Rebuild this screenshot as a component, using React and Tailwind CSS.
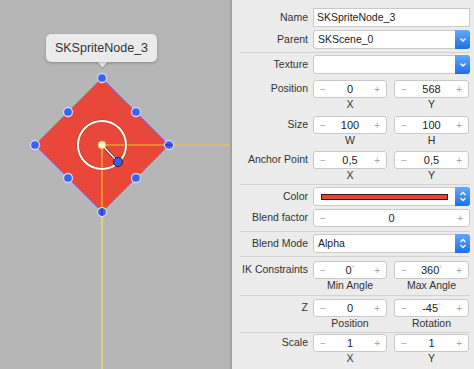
import React from 'react';

const font = { fontFamily: '"Liberation Sans", Arial, sans-serif' };

function Label({ children }) {
  return (
    <div className="w-[81px] shrink-0 pr-[5px] text-right text-[10.5px] text-[#333]">{children}</div>
  );
}

function Divider() {
  return <div className="ml-[8px] h-px bg-[#d2d2d2]" />;
}

function Deg({ children }) {
  return (
    <span>
      {children}
      <span className="relative -top-[3px] text-[7px] text-[#aaa]">°</span>
    </span>
  );
}

function Stepper({ value, sub }) {
  return (
    <div className="flex flex-col items-center">
      <div className="flex h-[18px] w-full items-center justify-between rounded-[3px] border border-[#c9c9c9] bg-white px-[6px] text-[11px] text-[#222]">
        <span className="text-[10px] text-[#a5a5a5]">−</span>
        <span>{value}</span>
        <span className="text-[10px] text-[#a5a5a5]">+</span>
      </div>
      {sub && <div className="h-[13px] text-[10.5px] leading-[13px] text-[#333]">{sub}</div>}
    </div>
  );
}

function StepperRow({ label, a, b, subA, subB, className = '' }) {
  return (
    <div className={`flex items-start ${className}`}>
      <div className="flex h-[18px] items-center">
        <Label>{label}</Label>
      </div>
      <div className="grid w-[156px] grid-cols-[74px_75px] gap-[7px]">
        <Stepper value={a} sub={subA} />
        <Stepper value={b} sub={subB} />
      </div>
    </div>
  );
}

function BlueButton({ updown }) {
  return (
    <div className="flex h-[19px] w-[15px] items-center justify-center rounded-r-[3px] bg-gradient-to-b from-[#62a8fb] to-[#1b6ded]">
      {updown ? (
        <svg width="8" height="11" viewBox="0 0 8 11">
          <path d="M1.5 4 L4 1.5 L6.5 4 M1.5 7 L4 9.5 L6.5 7" fill="none" stroke="white" strokeWidth="1.3" />
        </svg>
      ) : (
        <svg width="8" height="6" viewBox="0 0 8 6">
          <path d="M1.5 1.5 L4 4 L6.5 1.5" fill="none" stroke="white" strokeWidth="1.4" />
        </svg>
      )}
    </div>
  );
}

function SelectRow({ label, value, updown, className = '', children }) {
  return (
    <div className={`flex items-center ${className}`}>
      <Label>{label}</Label>
      <div className="flex h-[19px] w-[157px] items-stretch rounded-[3px] border border-[#c9c9c9] bg-white">
        <div className="flex flex-1 items-center px-[4px] text-[10.5px] text-[#222]">
          {children || value}
        </div>
        <div className="-my-px -mr-px">
          <BlueButton updown={updown} />
        </div>
      </div>
    </div>
  );
}

function Canvas() {
  return (
    <div className="relative h-[369px] w-[230px] shrink-0 bg-[#b6b6b6]">
      <svg width="230" height="369" className="absolute left-0 top-0">
        <polygon points="102,78 169,145 102,212 35,145" fill="#e9473a" stroke="#8773c4" strokeWidth="1" />
        <line x1="102" y1="145" x2="102" y2="212" stroke="#f6a62a" strokeWidth="1.5" />
        <line x1="102" y1="212" x2="102" y2="369" stroke="#e2cf86" strokeWidth="2" />
        <line x1="102" y1="145" x2="169" y2="145" stroke="#f5bf33" strokeWidth="1.2" />
        <line x1="169" y1="145" x2="230" y2="145" stroke="#f2cc3c" strokeWidth="1.2" />
        <circle cx="102" cy="145" r="24" fill="none" stroke="#6b3a30" strokeWidth="3.2" opacity="0.5" />
        <circle cx="102" cy="145" r="24" fill="none" stroke="#fffbee" strokeWidth="2" />
        <line x1="102" y1="145" x2="118" y2="162" stroke="#5a2a20" strokeWidth="3" />
        <line x1="102" y1="145" x2="118" y2="162" stroke="#ffffff" strokeWidth="1.5" />
        <circle cx="118" cy="162" r="4.5" fill="#3e5fe2" stroke="#1f1f2a" strokeWidth="1" />
        <circle cx="102" cy="145" r="4" fill="#fff4c8" stroke="#d8b24a" strokeWidth="1" />
        {[
          [102, 78],
          [68, 112],
          [136, 112],
          [35, 145],
          [169, 145],
          [68, 178],
          [136, 178],
          [102, 212],
        ].map(([x, y]) => (
          <circle key={`${x}-${y}`} cx={x} cy={y} r="4.5" fill="#3d63ee" stroke="#cfd6ff" strokeWidth="1.3" />
        ))}
        <line x1="102" y1="208" x2="102" y2="216" stroke="#2b3a8a" strokeWidth="1.2" />
        <line x1="165" y1="145" x2="173" y2="145" stroke="#2b3a8a" strokeWidth="1.2" />
      </svg>
      {/* tooltip */}
      <div className="absolute left-[46px] top-[34px] h-[28px] w-[111px]">
        <div className="absolute left-[51px] top-[20px] h-[11px] w-[11px] rotate-45 bg-[#ebebeb] shadow-[1px_1px_1px_rgba(0,0,0,0.15)]" />
        <div className="relative flex h-full w-full items-center justify-center rounded-[5px] bg-[#ebebeb] text-[12.5px] text-[#333] shadow-[0_1px_3px_rgba(0,0,0,0.25)]">
          SKSpriteNode_3
        </div>
      </div>
    </div>
  );
}

export default function App() {
  return (
    <div className="flex h-[369px] w-[474px] overflow-hidden" style={font}>
      <Canvas />
      <div className="w-[2px] shrink-0 bg-[#a2a2a2]" />
      <div className="flex flex-1 flex-col bg-[#ececec] pr-[5px]">
        <div className="flex items-center pt-[8px]">
          <Label>Name</Label>
          <div className="flex h-[19px] w-[157px] items-center border border-[#c9c9c9] bg-white px-[3px] text-[10.5px] text-[#222]">
            SKSpriteNode_3
          </div>
        </div>
        <SelectRow label="Parent" value="SKScene_0" className="mt-[3px]" />
        <div className="mt-[3px]">
          <Divider />
        </div>
        <SelectRow label="Texture" value="" className="mt-[2px]" />
        <StepperRow label="Position" a="0" b="568" subA="X" subB="Y" className="mt-[6px]" />
        <StepperRow label="Size" a="100" b="100" subA="W" subB="H" className="mt-[5px]" />
        <StepperRow label="Anchor Point" a="0,5" b="0,5" subA="X" subB="Y" className="mt-[4px]" />
        <div className="mt-[2px]">
          <Divider />
        </div>
        <SelectRow label="Color" updown className="mt-[2px]">
          <div className="mx-[3px] h-[6px] w-full border border-[#3a1a16] bg-[#e5443a]" />
        </SelectRow>
        <div className="mt-[3px] flex items-center">
          <Label>Blend factor</Label>
          <div className="flex h-[18px] w-[157px] items-center justify-between rounded-[3px] border border-[#c9c9c9] bg-white px-[6px] text-[11px] text-[#222]">
            <span className="text-[10px] text-[#a5a5a5]">−</span>
            <span>0</span>
            <span className="text-[10px] text-[#a5a5a5]">+</span>
          </div>
        </div>
        <div className="mt-[4px]">
          <Divider />
        </div>
        <SelectRow label="Blend Mode" value="Alpha" updown className="mt-[2px]" />
        <div className="mt-[3px]">
          <Divider />
        </div>
        <StepperRow
          label="IK Constraints"
          a={<Deg>0</Deg>}
          b={<Deg>360</Deg>}
          subA="Min Angle"
          subB="Max Angle"
          className="mt-[4px]"
        />
        <div className="mt-[3px]">
          <Divider />
        </div>
        <StepperRow label="Z" a="0" b={<Deg>-45</Deg>} subA="Position" subB="Rotation" className="mt-[3px]" />
        <div className="mt-[2px]">
          <Divider />
        </div>
        <StepperRow label="Scale" a="1" b="1" subA="X" subB="Y" className="mt-[1px]" />
      </div>
    </div>
  );
}
